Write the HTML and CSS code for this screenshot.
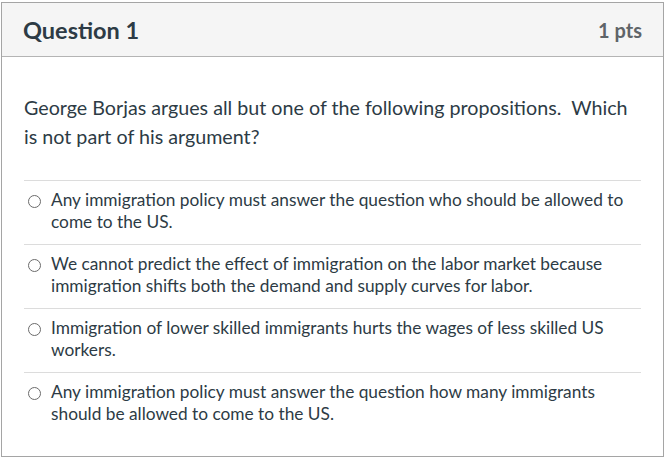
FILE: index.html
```html
<!DOCTYPE html>
<html>
<head>
<meta charset="utf-8">
<link rel="stylesheet" href="styles.css">
</head>
<body>
<div class="question">
  <div class="q-header">
    <span class="q-title">Question 1</span>
    <span class="q-points">1 pts</span>
  </div>
  <div class="q-body">
    <p class="q-text">George Borjas argues all but one of the following propositions.&nbsp; Which is not part of his argument?</p>
    <div class="answers">
      <label class="answer"><span class="radio"></span><span class="answer-text">Any immigration policy must answer the question who should be allowed to come to the US.</span></label>
      <label class="answer"><span class="radio"></span><span class="answer-text">We cannot predict the effect of immigration on the labor market because immigration shifts both the demand and supply curves for labor.</span></label>
      <label class="answer"><span class="radio"></span><span class="answer-text">Immigration of lower skilled immigrants hurts the wages of less skilled US workers.</span></label>
      <label class="answer"><span class="radio"></span><span class="answer-text">Any immigration policy must answer the question how many immigrants should be allowed to come to the US.</span></label>
    </div>
  </div>
</div>
</body>
</html>
```

FILE: styles.css
```css
html, body {
  margin: 0;
  padding: 0;
  background: #ffffff;
}
body {
  padding: 2px 0 0 1px;
  font-family: Lato, "Open Sans", sans-serif;
  color: #2d3b45;
}
.question {
  width: 661px;
  height: 453px;
  border: 1px solid #a5a5a5;
  box-sizing: content-box;
}
.q-header {
  height: 53px;
  background: #f5f5f5;
  border-bottom: 1px solid #b4b4b4;
  display: flex;
  align-items: center;
  justify-content: space-between;
  padding: 0 21px 0 21px;
}
.q-title {
  font-size: 23.5px;
  font-weight: 700;
  color: #2d3b45;
}
.q-points {
  font-size: 20px;
  font-weight: 700;
  color: #5f6468;
}
.q-body {
  padding: 0 22px 0 22px;
}
.q-text {
  margin: 0;
  padding: 36px 0 29px 0;
  font-size: 19.7px;
  line-height: 29px;
}
.answers {
  display: flex;
  flex-direction: column;
}
.answer {
  display: flex;
  align-items: flex-start;
  border-top: 1px solid #dcdcdc;
  padding: 8px 0 11px 0;
  font-size: 17.3px;
  line-height: 22px;
}
.radio {
  flex: none;
  width: 11px;
  height: 11px;
  border: 1px solid #6b6b6b;
  border-radius: 50%;
  margin: 6px 10px 0 4px;
}
.answer-text {
  flex: 1;
  padding-right: 10px;
}
```
